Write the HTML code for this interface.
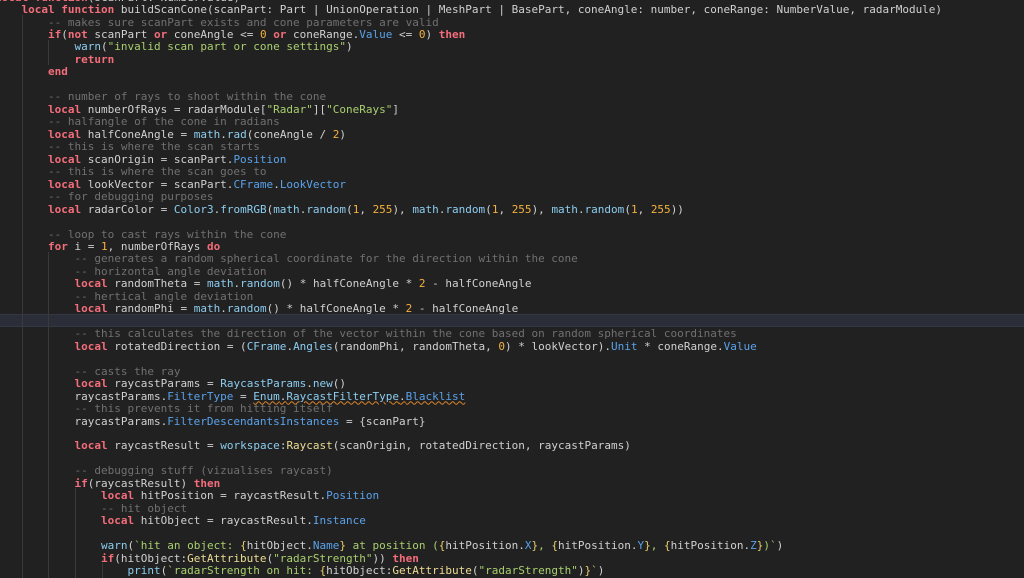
<!DOCTYPE html>
<html><head><meta charset="utf-8"><style>
html,body{margin:0;padding:0;background:#212121;width:1024px;height:578px;overflow:hidden}
#ed{position:absolute;left:0;top:0;width:1024px;height:578px;background:#212121}
.hl{position:absolute;left:0;top:314px;width:1024px;height:13px;background:#2b2e38;border-top:1px solid #343844;border-bottom:1px solid #343844;box-sizing:border-box}
.g{position:absolute;width:1px;background:#3a3a3a}
pre{position:absolute;left:-5px;top:-8.4px;margin:0;font-family:"DejaVu Sans Mono","Liberation Mono",monospace;font-size:11px;line-height:12.47px;color:#d0d0d0;white-space:pre}
.k{color:#f46d7a;font-weight:bold}
.c{color:#707070}
.s{color:#a9cf6e}
.n{color:#f6b13e}
.p{color:#5aa2ea}
.b{color:#8ccdf0}
.m{color:#ecdc94}
.y{color:#e8d06a}
.u{text-decoration:underline wavy #d9822b;text-decoration-thickness:1px}
</style></head><body><div id="ed">
<div class="hl"></div>
<div class="g" style="left:22px;top:15px;height:563px"></div>
<div class="g" style="left:48px;top:40px;height:25px"></div>
<div class="g" style="left:48px;top:252px;height:326px"></div>
<div class="g" style="left:75px;top:488px;height:90px"></div>
<div class="g" style="left:102px;top:563px;height:15px"></div>
<pre><span class="k">local</span> <span class="k">function</span>(<span>scanPart: NumberValue</span>)
    <span class="k">local</span> <span class="k">function</span> buildScanCone(scanPart: Part | UnionOperation | MeshPart | BasePart, coneAngle: number, coneRange: NumberValue, radarModule)
        <span class="c">-- makes sure scanPart exists and cone parameters are valid</span>
        <span class="k">if</span>(<span class="k">not</span> scanPart <span class="k">or</span> coneAngle &lt;= <span class="n">0</span> <span class="k">or</span> coneRange.<span class="p">Value</span> &lt;= <span class="n">0</span>) <span class="k">then</span>
            <span class="b">warn</span>(<span class="s">"invalid scan part or cone settings"</span>)
            <span class="k">return</span>
        <span class="k">end</span>

        <span class="c">-- number of rays to shoot within the cone</span>
        <span class="k">local</span> numberOfRays = radarModule[<span class="s">"Radar"</span>][<span class="s">"ConeRays"</span>]
        <span class="c">-- halfangle of the cone in radians</span>
        <span class="k">local</span> halfConeAngle = <span class="b">math</span>.<span class="b">rad</span>(coneAngle / <span class="n">2</span>)
        <span class="c">-- this is where the scan starts</span>
        <span class="k">local</span> scanOrigin = scanPart.<span class="p">Position</span>
        <span class="c">-- this is where the scan goes to</span>
        <span class="k">local</span> lookVector = scanPart.<span class="p">CFrame</span>.<span class="p">LookVector</span>
        <span class="c">-- for debugging purposes</span>
        <span class="k">local</span> radarColor = <span class="b">Color3</span>.<span class="b">fromRGB</span>(<span class="b">math</span>.<span class="b">random</span>(<span class="n">1</span>, <span class="n">255</span>), <span class="b">math</span>.<span class="b">random</span>(<span class="n">1</span>, <span class="n">255</span>), <span class="b">math</span>.<span class="b">random</span>(<span class="n">1</span>, <span class="n">255</span>))

        <span class="c">-- loop to cast rays within the cone</span>
        <span class="k">for</span> i = <span class="n">1</span>, numberOfRays <span class="k">do</span>
            <span class="c">-- generates a random spherical coordinate for the direction within the cone</span>
            <span class="c">-- horizontal angle deviation</span>
            <span class="k">local</span> randomTheta = <span class="b">math</span>.<span class="b">random</span>() * halfConeAngle * <span class="n">2</span> - halfConeAngle
            <span class="c">-- hertical angle deviation</span>
            <span class="k">local</span> randomPhi = <span class="b">math</span>.<span class="b">random</span>() * halfConeAngle * <span class="n">2</span> - halfConeAngle

            <span class="c">-- this calculates the direction of the vector within the cone based on random spherical coordinates</span>
            <span class="k">local</span> rotatedDirection = (<span class="b">CFrame</span>.<span class="b">Angles</span>(randomPhi, randomTheta, <span class="n">0</span>) * lookVector).<span class="p">Unit</span> * coneRange.<span class="p">Value</span>

            <span class="c">-- casts the ray</span>
            <span class="k">local</span> raycastParams = <span class="b">RaycastParams</span>.<span class="b">new</span>()
            raycastParams.<span class="p">FilterType</span> = <span class="u"><span class="b">Enum</span>.<span class="b">RaycastFilterType</span>.<span class="p">Blacklist</span></span>
            <span class="c">-- this prevents it from hitting itself</span>
            raycastParams.<span class="p">FilterDescendantsInstances</span> = {scanPart}

            <span class="k">local</span> raycastResult = <span class="b">workspace</span>:<span class="m">Raycast</span>(scanOrigin, rotatedDirection, raycastParams)

            <span class="c">-- debugging stuff (vizualises raycast)</span>
            <span class="k">if</span>(raycastResult) <span class="k">then</span>
                <span class="k">local</span> hitPosition = raycastResult.<span class="p">Position</span>
                <span class="c">-- hit object</span>
                <span class="k">local</span> hitObject = raycastResult.<span class="p">Instance</span>

                <span class="b">warn</span>(<span class="s">`hit an object: </span><span class="y">{</span>hitObject.<span class="p">Name</span><span class="y">}</span><span class="s"> at position (</span><span class="y">{</span>hitPosition.<span class="p">X</span><span class="y">}</span><span class="s">, </span><span class="y">{</span>hitPosition.<span class="p">Y</span><span class="y">}</span><span class="s">, </span><span class="y">{</span>hitPosition.<span class="p">Z</span><span class="y">}</span><span class="s">)`</span>)
                <span class="k">if</span>(hitObject:<span class="m">GetAttribute</span>(<span class="s">"radarStrength"</span>)) <span class="k">then</span>
                    <span class="b">print</span>(<span class="s">`radarStrength on hit: </span><span class="y">{</span>hitObject:<span class="m">GetAttribute</span>(<span class="s">"radarStrength"</span>)<span class="y">}</span><span class="s">`</span>)
</pre>
</div></body></html>
